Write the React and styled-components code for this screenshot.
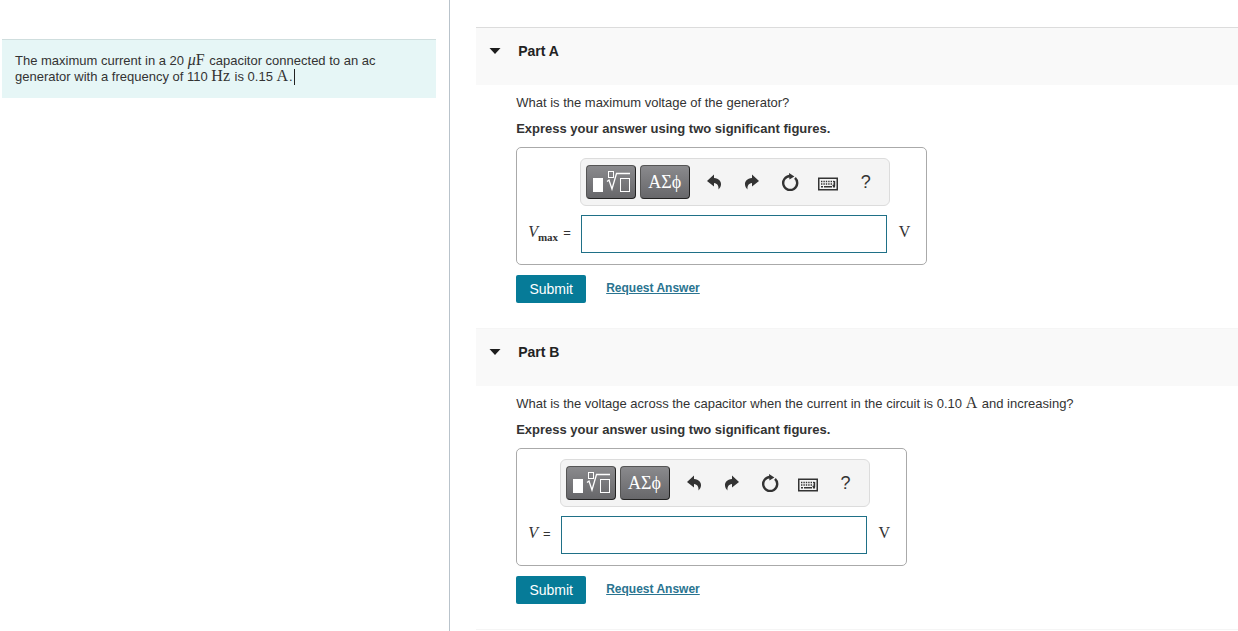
import React from "react";
import styled, { createGlobalStyle } from "styled-components";

function App() {
  return (
    <>
      <GlobalStyle />
      <Page>
        <Sidebar>
          <Problem>
            The maximum current in a 20 <Var>μ</Var><Unit>F</Unit> capacitor connected to an ac
            generator with a frequency of 110 <Unit>Hz</Unit> is 0.15 <Unit>A</Unit>.<Caret />
          </Problem>
        </Sidebar>
        <Main>
          <Part id="a" title="Part A" symbol={<><Var>V</Var><Sub>max</Sub></>} $first>
            What is the maximum voltage of the generator?
          </Part>
          <Part id="b" title="Part B" symbol={<Var>V</Var>}>
            What is the voltage across the capacitor when the current in the circuit is 0.10{" "}
            <Unit>A</Unit> and increasing?
          </Part>
          <Section as="div" />
        </Main>
      </Page>
    </>
  );
}

function Part({ id, title, symbol, $first, children }) {
  return (
    <Section $first={$first}>
      <Header>
        <Title>
          <Toggle type="button" aria-expanded="true">
            <svg width="12" height="6" viewBox="0 0 12 6">
              <path d="M0.5 0H11.5L6 6Z" fill="#1d1d1d" />
            </svg>
            {title}
          </Toggle>
        </Title>
      </Header>
      <Content>
        <Question>{children}</Question>
        <Instruction>Express your answer using two significant figures.</Instruction>
        <AnswerBox>
          <Toolbar role="toolbar" aria-label="Math tools">
            <DarkButton type="button" aria-label="Templates">
              <TemplateIcon />
            </DarkButton>
            <DarkButton type="button">ΑΣϕ</DarkButton>
            <Tools>
              <ToolButton type="button" aria-label="Undo"><UndoIcon /></ToolButton>
              <ToolButton type="button" aria-label="Redo"><RedoIcon /></ToolButton>
              <ToolButton type="button" aria-label="Reset"><ResetIcon /></ToolButton>
              <ToolButton type="button" aria-label="Keyboard shortcuts"><KeyboardIcon /></ToolButton>
              <ToolButton type="button">?</ToolButton>
            </Tools>
          </Toolbar>
          <Label htmlFor={`answer-${id}`}>
            <span>{symbol}</span>
            <span>=</span>
          </Label>
          <Answer id={`answer-${id}`} type="text" />
          <Suffix>V</Suffix>
        </AnswerBox>
        <Actions>
          <Submit type="button">Submit</Submit>
          <RequestLink href="#">Request Answer</RequestLink>
        </Actions>
      </Content>
    </Section>
  );
}

const TemplateIcon = () => (
  <svg width="38" height="24" viewBox="0 0 38 24" fill="none" stroke="#fff">
    <rect x="1" y="8" width="10" height="14" fill="#fff" stroke="none" />
    <rect x="16.5" y="1.5" width="5" height="6" />
    <path d="M15 11.5L17 10L20 19L24.5 3.5H38" strokeWidth="1.3" />
    <rect x="28.5" y="8.5" width="9" height="13" />
  </svg>
);

const arrow = "M1 7L8 0.5V4C13 4.3 15.3 7.5 15 10.5C14.8 12.5 14 14 12.5 15.5C12.8 11.8 11.5 9.4 8 9V12.5Z";

const UndoIcon = () => (
  <svg width="16" height="16" viewBox="0 0 16 16">
    <path d={arrow} fill="#333" />
  </svg>
);

const RedoIcon = () => (
  <svg width="16" height="16" viewBox="0 0 16 16">
    <path d={arrow} fill="#333" transform="translate(16 0) scale(-1 1)" />
  </svg>
);

const ResetIcon = () => (
  <svg width="18" height="18" viewBox="0 0 18 18">
    <path d="M14 4.9A7 7 0 1 1 9 3" fill="none" stroke="#333" strokeWidth="2.4" />
    <path d="M8 0L13.4 3.4L8.4 6.6Z" fill="#333" />
  </svg>
);

const KeyboardIcon = () => (
  <svg width="20" height="18" viewBox="0 0 20 18" fill="none" stroke="#333">
    <rect x="0.75" y="5.25" width="18.5" height="11.5" strokeWidth="1.5" />
    <path d="M3 8.5H17" strokeWidth="1.4" strokeDasharray="1.4 1" />
    <path d="M3 11H15.5" strokeWidth="1.4" strokeDasharray="1.4 1" />
    <path d="M16.5 8V12.5H14.5" strokeWidth="1.4" />
    <path d="M3 13.8H5M6 13.8H14M15 13.8H17" strokeWidth="1.4" />
  </svg>
);

export default App;

const GlobalStyle = createGlobalStyle`
  * {
    box-sizing: border-box;
  }

  body {
    margin: 0;
    background: #fff;
    color: #333;
    font-family: "Liberation Sans", Arial, sans-serif;
    font-size: 13px;
    line-height: 16px;
  }

  button, input {
    font-family: inherit;
  }
`;

const Page = styled.div`
  display: grid;
  grid-template-columns: minmax(0, 4fr) minmax(0, 7fr);
  height: 100vh;
  overflow: hidden;
`;

const Sidebar = styled.aside`
  padding: 39px 13px 0 2px;
  border-right: 1px solid #b9c3cb;
`;

const Problem = styled.p`
  margin: 0;
  padding: 13px 36px 13px 13px;
  border-top: 1px solid #cfdede;
  background: #e6f6f6;
`;

const Unit = styled.span`
  margin-right: 1px;
  font-family: "Liberation Serif", "Times New Roman", serif;
  font-size: 16px;
  line-height: 1px;
`;

const Var = styled(Unit)`
  margin-right: 0;
  font-style: italic;
`;

const Sub = styled.sub`
  font-family: "Liberation Serif", "Times New Roman", serif;
  font-size: 11px;
  font-weight: bold;
  line-height: 1px;
`;

const Caret = styled.span`
  display: inline-block;
  width: 1px;
  height: 16px;
  margin: -4px 0 -4px 1px;
  background: #222;
`;

const Main = styled.main`
  padding: 27px 0 0 26px;
`;

const Section = styled.section`
  border-top: 1px solid ${(props) => (props.$first ? "#dcdcdc" : "#f5f5f5")};
`;

const Header = styled.header`
  height: 57px;
  padding: 15px 13px;
  background: #f9f9f9;
`;

const Title = styled.h2`
  margin: 0;
  font-size: 14px;
  line-height: 16px;
`;

const Toggle = styled.button`
  display: flex;
  align-items: center;
  gap: 17px;
  padding: 0;
  border: 0;
  background: none;
  color: #222;
  font-size: 14px;
  font-weight: bold;
  line-height: 16px;
  cursor: pointer;
`;

const Content = styled.div`
  padding: 10px 0 25px 40px;
`;

const Question = styled.p`
  margin: 0 0 10px;
`;

const Instruction = styled.p`
  margin: 0 0 10px;
  font-weight: bold;
`;

const AnswerBox = styled.div`
  display: grid;
  grid-template-columns: auto 310px auto;
  column-gap: 9px;
  row-gap: 9px;
  align-items: center;
  width: fit-content;
  padding: 10px 16px 11px 11px;
  border: 1px solid #aaa;
  border-radius: 5px;
`;

const Toolbar = styled.div`
  grid-column: 2;
  display: flex;
  align-items: center;
  gap: 4px;
  height: 48px;
  padding: 0 4px 0 5px;
  border: 1px solid #dcdcdc;
  border-radius: 6px;
  background: #f4f4f4;
`;

const DarkButton = styled.button`
  display: flex;
  align-items: center;
  justify-content: center;
  width: 50px;
  height: 34px;
  padding: 0;
  border: 1px solid #555;
  border-right-color: #222;
  border-bottom-color: #222;
  border-radius: 4px;
  background: linear-gradient(#8a8a8d, #67676a);
  color: #fff;
  && {
    font-family: "Liberation Serif", "Times New Roman", serif;
  }
  font-size: 18px;
  cursor: pointer;
`;

const Tools = styled.div`
  display: flex;
  margin-left: 1px;
`;

const ToolButton = styled.button`
  display: flex;
  align-items: center;
  justify-content: center;
  width: 38px;
  height: 34px;
  padding: 0;
  border: 0;
  background: none;
  color: #333;
  font-size: 18px;
  cursor: pointer;
`;

const Label = styled.label`
  grid-column: 1;
  display: flex;
  align-items: baseline;
  gap: 5px;
  padding-bottom: 2px;
`;

const Answer = styled.input`
  width: 306px;
  height: 38px;
  margin-left: 1px;
  padding: 0 8px;
  border: 1px solid #1f7087;
  background: #fff;
  font-size: 16px;
`;

const Suffix = styled(Unit)`
  margin-right: 0;
  padding-bottom: 4px;
  line-height: 16px;
`;

const Actions = styled.div`
  display: flex;
  align-items: center;
  gap: 20px;
  margin-top: 10px;
`;

const Submit = styled.button`
  width: 70px;
  height: 28px;
  padding: 0;
  border: 0;
  border-radius: 2px;
  background: #067b98;
  color: #fff;
  font-size: 14px;
  cursor: pointer;
`;

const RequestLink = styled.a`
  padding-bottom: 2px;
  color: #2a7490;
  font-size: 12px;
  font-weight: bold;
`;
